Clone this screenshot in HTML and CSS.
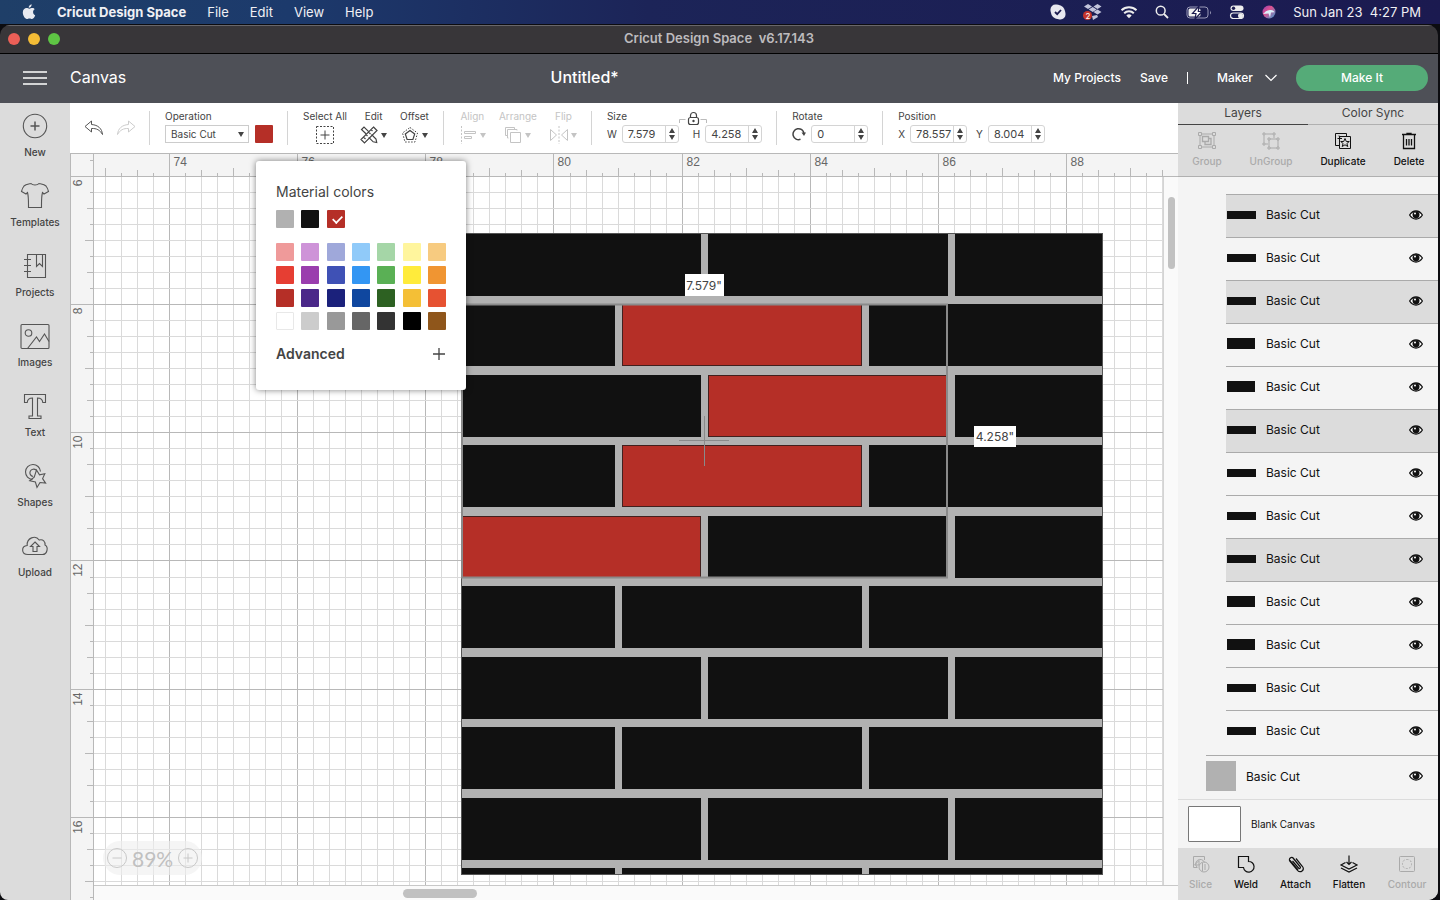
FILE: index.html
```html
<!DOCTYPE html>
<html lang="en">

<head>
    <meta charset="UTF-8">
    <title>Cricut Design Space</title>
    <link rel="stylesheet" href="styles.css">
</head>

<body>
    <svg class="defs" aria-hidden="true">
        <symbol id="eye" viewBox="0 0 14 10">
            <path d="M.6 5C2.4 2.2 4.5 1 7 1s4.600 1.200 6.400 4C11.600 7.800 9.500 9 7 9S2.400 7.800.6 5z" fill="#fff" stroke="#111" stroke-width="1.300" />
            <circle cx="7" cy="4.700" r="3.500" fill="#111" />
            <circle cx="6" cy="3.600" r="1" fill="#fff" />
        </symbol>
        <symbol id="caret" viewBox="0 0 6 6">
            <path d="M0 .5h6L3 5.500z" fill="currentColor" />
        </symbol>
        <symbol id="steps" viewBox="0 0 8 12">
            <path d="M1 5l3-5 3 5zM1 7l3 5 3-5z" fill="#444" />
        </symbol>
    </svg>

    <div class="menubar">
        <svg class="apple" width="14" height="16" viewBox="0 0 14 16" fill="#e8eaf0">
            <path d="M9.700.2c.1 1.900-1.300 3.400-3 3.500C6.500 2 8 .4 9.700.2z" />
            <path d="M12.700 5.300c-1.100.7-1.700 1.600-1.600 2.900 0 1.400.8 2.500 2.100 3-.5 1.400-1.700 3.700-3.100 3.800-1 0-1.400-.6-2.600-.6s-1.700.6-2.600.6C3 15.100.8 11.600.8 8.600c0-2.900 1.900-4.500 3.700-4.500 1.200 0 2 .7 2.900.7.900 0 1.700-.7 3.100-.7.900 0 1.700.5 2.200 1.200z" />
        </svg>
        <nav>
            <a href="#" class="app-name">Cricut Design Space</a>
            <a href="#">File</a>
            <a href="#">Edit</a>
            <a href="#">View</a>
            <a href="#">Help</a>
        </nav>
        <div class="status">
            <svg width="16" height="16" viewBox="0 0 16 16">
                <rect x=".5" y=".5" width="11" height="11" rx="5" fill="#e8e8f0" />
                <rect x="4.500" y="4.500" width="11" height="11" rx="5" fill="#e8e8f0" />
                <circle cx="8" cy="8" r="7" fill="#e8e8f0" />
                <path d="M5 8l2.200 2.200L11 6" fill="none" stroke="#1c1c50" stroke-width="1.800" />
            </svg>
            <svg width="20" height="18" viewBox="0 0 20 18">
                <path d="M5 1l4 2.500L5 6 1 3.500zM14.500 1l4 2.500-4 2.500-4-2.500zM14.500 6.500l4 2.500-4 2.500-4-2.500zM9.700 4l4 2.500-4 2.500-4-2.500zM9 13l5-1 1 2-5 3z" fill="#c3c5dc" />
                <circle cx="4.500" cy="12.500" r="4.500" fill="#c5352b" />
                <text x="2.500" y="15.500" font-size="8" fill="#fff">2</text>
            </svg>
            <svg width="18" height="14" viewBox="0 0 18 14" fill="none" stroke="#eee" stroke-width="2">
                <path d="M1.500 5.200a11 11 0 0 1 15 0M4.200 8.200a7 7 0 0 1 9.600 0" />
                <path d="M6.300 10.600a4 4 0 0 1 5.400 0L9 13.300z" fill="#eee" stroke="none" />
            </svg>
            <svg width="14" height="14" viewBox="0 0 14 14" fill="none" stroke="#eee" stroke-width="1.500">
                <circle cx="5.700" cy="5.700" r="4.400" />
                <path d="M9 9l4 4" stroke-width="1.800" />
            </svg>
            <svg width="26" height="13" viewBox="0 0 26 13">
                <rect x="1" y="1" width="21" height="11" rx="3" fill="none" stroke="#9a9ab8" />
                <path d="M24 4.500q1.800 2 0 4z" fill="#9a9ab8" />
                <rect x="2.500" y="2.500" width="12" height="8" rx="1.500" fill="#eee" />
                <path d="M13 0L6.500 7.500H10L9 13l7-7.500h-3.700z" fill="#fff" stroke="#1c1c50" stroke-width="1.200" />
            </svg>
            <svg width="16" height="14" viewBox="0 0 16 14">
                <rect x="1.500" y=".5" width="13" height="5.500" rx="2.750" fill="#eee" />
                <circle cx="4.500" cy="3.250" r="1.700" fill="#1c1c50" />
                <rect x="1.500" y="8" width="13" height="5.500" rx="2.750" fill="none" stroke="#eee" stroke-width="1.200" />
                <circle cx="11.500" cy="10.750" r="2.500" fill="#eee" />
            </svg>
            <svg width="14" height="14" viewBox="0 0 14 14">
                <defs>
                    <linearGradient id="siri" x1="0" y1="0" x2="1" y2="1">
                        <stop offset="0" stop-color="#8a3fb0" />
                        <stop offset=".4" stop-color="#e0508f" />
                        <stop offset="1" stop-color="#35a0d0" />
                    </linearGradient>
                </defs>
                <circle cx="7" cy="7" r="6.500" fill="url(#siri)" />
                <path d="M1 9c2-2 4-4.500 8-4 2 .3 3 1.200 3.500 2.200L9 7.500 8 12.500 6.500 8.500z" fill="#dcf0fa" />
            </svg>
            <span class="clock">Sun Jan 23&nbsp; 4:27 PM</span>
        </div>
    </div>

    <div class="window">
        <div class="titlebar">
            <div class="lights"><i class="red"></i><i class="yellow"></i><i class="green"></i></div>
            <span>Cricut Design Space&nbsp; v6.17.143</span>
        </div>

        <header class="header">
            <div class="header-left">
                <button aria-label="Menu">
                    <svg width="24" height="14" viewBox="0 0 24 14" stroke="#fff" stroke-width="1.500">
                        <path d="M0 1h24M0 7h24M0 13h24" />
                    </svg>
                </button>
                <span>Canvas</span>
            </div>
            <h1>Untitled*</h1>
            <div class="header-right">
                <a href="#">My Projects</a>
                <a href="#">Save</a>
                <span class="bar"></span>
                <button class="machine">Maker
                    <svg width="12" height="8" viewBox="0 0 12 8" fill="none" stroke="#fff" stroke-width="1.200">
                        <path d="M.5 1L6 6.500 11.500 1" />
                    </svg>
                </button>
                <button class="make-it">Make It</button>
            </div>
        </header>

        <div class="main">
            <nav class="sidebar">
                <button>
                    <svg width="30" height="30" viewBox="0 0 30 30">
                        <circle cx="15" cy="15" r="11.700" />
                        <path d="M15 10.500v9M10.500 15h9" stroke-width="1.500" />
                    </svg>
                    New
                </button>
                <button>
                    <svg width="30" height="30" viewBox="0 0 30 30">
                        <path d="M11 2.500c1.500 2 6.500 2 8 0 2.500.6 5.500 1 7 2.500.8 1 2 3.500 2.500 5.500L24 13l-1.500-1.500c-1.200 4.500-1 9-1 15H8.500c0-6 .2-10.500-1-15L6 13l-4.500-2.500C2 8.500 3.200 6 4 5c1.500-1.500 4.500-1.900 7-2.500z" />
                    </svg>
                    Templates
                </button>
                <button>
                    <svg width="30" height="30" viewBox="0 0 30 30">
                        <path d="M7.500 3.500h18v23h-18zM4 8.500h7M4 14.500h7M4 20.500h7M16.500 3.500v12l3-3 3 3v-12" />
                    </svg>
                    Projects
                </button>
                <button>
                    <svg width="30" height="30" viewBox="0 0 30 30">
                        <rect x="1" y="3.500" width="28" height="24" rx="1" />
                        <circle cx="8.500" cy="12" r="3.300" />
                        <path d="M7.500 27.500l9-11.500 3 4.500 5-7.500 4.500 7.500" />
                    </svg>
                    Images
                </button>
                <button>
                    <svg width="30" height="30" viewBox="0 0 30 30">
                        <path d="M4.500 3.500h21v8h-2.700c-.3-3-1.500-4.500-5.300-4.500v18h3.500v2.500H9V25h3.500V7c-3.800 0-5 1.500-5.300 4.500H4.500z" />
                    </svg>
                    Text
                </button>
                <button>
                    <svg width="30" height="30" viewBox="0 0 30 30">
                        <path d="M12.500 18.500A7.500 7.500 0 1 1 20.500 10.500M13.200 15.500a3.700 3.700 0 1 1 3-6.300" />
                        <path d="M16.500 9l3 4.800 5.300-1.100-2.200 4.900 3 4.500-5.600-.6-3 5-1.600-5.500-5.700-1.300 4.500-3.600z" />
                    </svg>
                    Shapes
                </button>
                <button>
                    <svg width="30" height="30" viewBox="0 0 30 30">
                        <path d="M8 23.500c-7 0-7-8.500-.8-9C6.500 7 15.500 3.500 19.200 9c4-1.200 6.200 1.800 5.800 5 3.800 2 2.300 9.500-2.500 9.500z" />
                        <path d="M15 11l4.500 4.500H17v5h-4v-5h-2.500z" />
                    </svg>
                    Upload
                </button>
            </nav>

            <section class="editor">
                <div class="toolbar">
                    <div class="group history">
                        <button aria-label="Undo">
                            <svg width="20" height="16" viewBox="0 0 20 16" fill="none" stroke="#555">
                                <path d="M7.500 1L1 6.500 7.500 12V8.500c5-.3 8.500 1.500 11 6C18 8.500 14 5 7.500 4.500z" />
                            </svg>
                        </button>
                        <button aria-label="Redo">
                            <svg width="20" height="16" viewBox="0 0 20 16" fill="none" stroke="#ccc">
                                <path d="M12.500 1L19 6.500 12.500 12V8.500c-5-.3-8.500 1.500-11 6C2 8.500 6 5 12.500 4.500z" />
                            </svg>
                        </button>
                    </div>
                    <div class="group operation">
                        <label for="operation">Operation</label>
                        <div class="controls">
                            <div class="select-wrap">
                                <select id="operation">
                                    <option>Basic Cut</option>
                                </select>
                                <svg width="6" height="7"><use href="#caret" /></svg>
                            </div>
                            <div class="color-picker">
                                <button class="swatch-button" aria-label="Material color"></button>
                                <div class="popup">
                                    <h2>Material colors</h2>
                                    <div class="swatches used"></div>
                                    <div class="swatches palette"></div>
                                    <button class="advanced">Advanced
                                        <svg width="14" height="14" viewBox="0 0 14 14" stroke="#444" stroke-width="1.300">
                                            <path d="M7 1v12M1 7h12" />
                                        </svg>
                                    </button>
                                </div>
                            </div>
                        </div>
                    </div>
                    <div class="group">
                        <button class="tool">Select All
                            <svg width="20" height="20" viewBox="0 0 20 20" fill="none" stroke="#444">
                                <rect x="1.500" y="1.500" width="17" height="17" stroke-dasharray="2 1.500" />
                                <path d="M10 5.500v9M5.500 10h9" />
                            </svg>
                        </button>
                        <button class="tool">Edit
                            <span>
                                <svg width="18" height="18" viewBox="0 0 18 18" fill="none" stroke="#444" stroke-width="1.200">
                                    <path d="M6.200 8L1.500 3.500 4 1l4.700 4.700M11.500 8.500l4.500 4.500.7 3.500-3.500-.7L8.700 11.300" />
                                    <path d="M13.500 1L17 4.500 4.500 17 1 13.500zM11 3.500l1.500 1.500M8.500 6l2 2M6 8.500L7.500 10M3.500 11l2 2" />
                                </svg>
                                <svg width="6" height="7"><use href="#caret" /></svg>
                            </span>
                        </button>
                        <button class="tool">Offset
                            <span>
                                <svg width="18" height="18" viewBox="0 0 18 18" fill="none" stroke="#444">
                                    <path d="M9 4.500l4.700 3.400-1.800 5.600H6.100L4.300 7.900z" stroke-width="1.200" />
                                    <path d="M9 1.500L16.500 7 14 16H4L1.500 7z" stroke-dasharray="1.500 1.500" />
                                </svg>
                                <svg width="6" height="7"><use href="#caret" /></svg>
                            </span>
                        </button>
                    </div>
                    <div class="group">
                        <button class="tool" disabled>Align
                            <span>
                                <svg width="18" height="18" viewBox="0 0 18 18" fill="none" stroke="currentColor">
                                    <path d="M2.500 0v18" stroke-dasharray="2 1.500" />
                                    <path d="M5.500 5.500h11v2h-11zM5.500 10.500h7v2h-7z" />
                                </svg>
                                <svg width="6" height="7"><use href="#caret" /></svg>
                            </span>
                        </button>
                        <button class="tool" disabled>Arrange
                            <span>
                                <svg width="18" height="18" viewBox="0 0 18 18" fill="none" stroke="currentColor">
                                    <path d="M6.500 6.500h10v10h-10z" />
                                    <path d="M4.500 12h-1V3.500H13v1M3.500 9.500h-2v-8h9v2" />
                                </svg>
                                <svg width="6" height="7"><use href="#caret" /></svg>
                            </span>
                        </button>
                        <button class="tool" disabled>Flip
                            <span>
                                <svg width="18" height="18" viewBox="0 0 18 18" fill="none" stroke="currentColor">
                                    <path d="M9 0v18" stroke-dasharray="2 1.500" />
                                    <path d="M.5 3.500l6 5.500-6 5.500zM17.500 3.500l-6 5.500 6 5.500z" />
                                </svg>
                                <svg width="6" height="7"><use href="#caret" /></svg>
                            </span>
                        </button>
                    </div>
                    <div class="group fields">
                        <span class="caption">Size</span>
                        <div class="controls size">
                            <label for="w">W</label>
                            <span class="stepper"><input id="w" value="7.579"><svg width="8" height="12"><use href="#steps" /></svg></span>
                            <label for="h">H</label>
                            <span class="stepper"><input id="h" value="4.258"><svg width="8" height="12"><use href="#steps" /></svg></span>
                            <svg class="lock" width="28" height="16" viewBox="0 0 28 16" fill="none">
                                <path d="M.5 12V8.500h6M27.500 12V8.500h-6" stroke="#bbb" />
                                <rect x="9.500" y="6.500" width="10" height="7" rx="2" stroke="#444" stroke-width="1.200" />
                                <path d="M11.500 6V4.500a3 3 0 0 1 6 0V6" stroke="#444" stroke-width="1.200" />
                                <circle cx="14.500" cy="10" r="1.200" fill="#444" />
                            </svg>
                        </div>
                    </div>
                    <div class="group fields">
                        <label for="rotate">Rotate</label>
                        <div class="controls">
                            <svg width="14" height="14" viewBox="0 0 14 14" fill="none" stroke="#444" stroke-width="1.500">
                                <path d="M8.500 12.300A5.500 5.500 0 1 1 12 6.500" />
                                <path d="M9.500 5.500h4.500L12 9z" fill="#444" stroke="none" />
                            </svg>
                            <span class="stepper"><input id="rotate" value="0"><svg width="8" height="12"><use href="#steps" /></svg></span>
                        </div>
                    </div>
                    <div class="group fields">
                        <span class="caption">Position</span>
                        <div class="controls position">
                            <label for="x">X</label>
                            <span class="stepper"><input id="x" value="78.557"><svg width="8" height="12"><use href="#steps" /></svg></span>
                            <label for="y">Y</label>
                            <span class="stepper"><input id="y" value="8.004"><svg width="8" height="12"><use href="#steps" /></svg></span>
                        </div>
                    </div>
                </div>

                <div class="workspace">
                    <svg class="ruler-top"></svg>
                    <svg class="ruler-left"></svg>
                    <div class="stage">
                        <svg class="grid"></svg>
                        <div class="zoom">
                            <button aria-label="Zoom out">
                                <svg width="20" height="20" viewBox="0 0 20 20" fill="none" stroke="#c8c8c8">
                                    <circle cx="10" cy="10" r="9.500" />
                                    <path d="M5.500 10h9" />
                                </svg>
                            </button>
                            <span>89%</span>
                            <button aria-label="Zoom in">
                                <svg width="20" height="20" viewBox="0 0 20 20" fill="none" stroke="#c8c8c8">
                                    <circle cx="10" cy="10" r="9.500" />
                                    <path d="M5.500 10h9M10 5.500v9" />
                                </svg>
                            </button>
                        </div>
                    </div>
                    <div class="scroll-y"><i></i></div>
                    <div class="scroll-x"><i></i></div>
                </div>
            </section>

            <aside class="panel">
                <div class="tabs">
                    <button class="active">Layers</button>
                    <button>Color Sync</button>
                </div>
                <div class="actions top">
                    <button disabled>
                        <svg width="20" height="20" viewBox="0 0 20 20">
                            <path d="M4.500 3h11M4.500 16h11M3 4.500v10M17 4.500v10M1.500 1.500h3v3h-3zM15.500 1.500h3v3h-3zM1.500 14.500h3v3h-3zM15.500 14.500h3v3h-3z" />
                            <path d="M5.500 5.500h6v5h-6zM11.500 7.500H14v6H8v-3" stroke-width="1.300" />
                        </svg>
                        Group
                    </button>
                    <button disabled>
                        <svg width="20" height="20" viewBox="0 0 20 20">
                            <path d="M4.500 3h7M3 4.500v7M7 13H4.500M13 4.500V7M9 8h7M8 9v7M9 17h7M17 9v7" />
                            <path d="M2 2h2v2H2zM12 2h2v2h-2zM2 12h2v2H2zM7 7h2v2H7zM16 7h2v2h-2zM7 16h2v2H7zM16 16h2v2h-2z" />
                        </svg>
                        UnGroup
                    </button>
                    <button>
                        <svg width="20" height="20" viewBox="0 0 20 20">
                            <path d="M6.500 14.500h-4v-12h11v3M6.500 5.500h11v12h-11z" />
                            <path d="M12 7.500l1.300 3h3l-2.400 2 .9 3L12 13.800l-2.800 1.700.9-3-2.400-2h3zM4.500 7.500H9M6 4.500l1 3" />
                        </svg>
                        Duplicate
                    </button>
                    <button>
                        <svg width="20" height="20" viewBox="0 0 20 20">
                            <path d="M3 3.500h14M8 3.500v-1h4v1M4.500 3.500v14h11v-14M7.500 8v6.500M10 8v6.500M12.500 8v6.500" stroke-width="1.300" />
                        </svg>
                        Delete
                    </button>
                </div>
                <ul class="layers"></ul>
                <div class="base-layer">
                    <i></i>
                    <span>Basic Cut</span>
                    <button aria-label="Hide layer"><svg width="14" height="10"><use href="#eye" /></svg></button>
                </div>
                <div class="blank">
                    <i></i>
                    <span>Blank Canvas</span>
                </div>
                <div class="actions bottom">
                    <button disabled>
                        <svg width="20" height="20" viewBox="0 0 20 20">
                            <path d="M6 13.500H2.500v-11h11V6M8 11V6.500L3.500 11z" />
                            <circle cx="13" cy="13" r="5" />
                            <path d="M6.500 13.500a4.500 4.500 0 1 1 7-5M11.500 9v8M14 10v6" />
                        </svg>
                        Slice
                    </button>
                    <button>
                        <svg width="20" height="20" viewBox="0 0 20 20">
                            <path d="M2.500 2.500h10v5a5.300 5.300 0 1 1-5 6h-5z" stroke-width="1.200" />
                        </svg>
                        Weld
                    </button>
                    <button>
                        <svg width="20" height="20" viewBox="0 0 20 20">
                            <path d="M6.500 7l6 7c1 1.200 2.600-.2 1.700-1.300L7.500 4.500C5.500 2 2 4.800 4 7.300l7.500 9c3 3.300 7.500-.3 5-3.800L10 4.500M7 4l7 8.500M4 6.500l8 9.500" stroke-width="1.200" />
                        </svg>
                        Attach
                    </button>
                    <button>
                        <svg width="20" height="20" viewBox="0 0 20 20">
                            <path d="M10 1.500v9M7.500 8L10 10.500 12.500 8M6.500 8.500L2 11l8 4 8-4-4.500-2.500M2 14l8 4 8-4" stroke-width="1.200" />
                        </svg>
                        Flatten
                    </button>
                    <button disabled>
                        <svg width="20" height="20" viewBox="0 0 20 20">
                            <rect x="2.500" y="2.500" width="15" height="15" rx="1" />
                            <rect x="5.500" y="5.500" width="9" height="9" rx="4" stroke-dasharray="2 1.500" />
                        </svg>
                        Contour
                    </button>
                </div>
            </aside>
        </div>
    </div>

    <script src="script.js"></script>
</body>

</html>
```
FILE: styles.css
```css
* {
    box-sizing: border-box;
}

body {
    margin: 0;
    height: 100vh;
    display: flex;
    flex-direction: column;
    overflow: hidden;
    background: #0c0c10;
    color: #444;
    font-family: Inter, "Liberation Sans", sans-serif;
    font-size: 12px;
}

button,
input,
select {
    font: inherit;
    color: inherit;
    background: none;
    border: 0;
    padding: 0;
    margin: 0;
}

a {
    color: inherit;
    text-decoration: none;
}

svg {
    display: block;
    flex-shrink: 0;
}

.defs {
    display: none;
}

/* mac menu bar */
.menubar {
    display: flex;
    align-items: center;
    height: 24px;
    flex-shrink: 0;
    padding: 0 19px 0 22px;
    background: linear-gradient(90deg, #1f3f68, #1c3a6c 20%, #1c2458 45%, #1b1a50);
    color: #f0f0f4;
    font-size: 13px;
}

.menubar nav {
    display: flex;
    gap: 21px;
    margin-left: 21px;
}

.menubar .app-name {
    font-weight: 700;
}

.status {
    display: flex;
    align-items: center;
    gap: 17px;
    margin-left: auto;
}

/* window */
.window {
    flex: 1;
    min-height: 0;
    display: flex;
    flex-direction: column;
    margin: 1px 2px 0 0;
    border-radius: 10px 10px 10px 8px;
    overflow: hidden;
}

.titlebar {
    display: flex;
    align-items: center;
    height: 29px;
    flex-shrink: 0;
    padding: 0 8px 1px;
    background: #383639;
    border-top: 1px solid #69676a;
    border-bottom: 1px solid #000;
    color: #bdbbbe;
    font-size: 13px;
    font-weight: 600;
}

.titlebar span {
    flex: 1;
    text-align: center;
    margin-right: 52px;
    padding-bottom: 2px;
}

.lights {
    display: flex;
    gap: 8px;
}

.lights i {
    width: 12px;
    height: 12px;
    border-radius: 50%;
}

.red {
    background: #ec5f57;
}

.yellow {
    background: #f4bc36;
}

.green {
    background: #5ec544;
}

.header {
    display: flex;
    align-items: center;
    justify-content: space-between;
    height: 49px;
    flex-shrink: 0;
    padding: 0 10px 2px 23px;
    background: #4e5057;
    color: #fff;
}

.header-left {
    display: flex;
    align-items: center;
    gap: 23px;
    font-size: 16px;
}

.header-left span,
.header h1 {
    padding-bottom: 2px;
}

.header h1 {
    margin: 0 10px 0 0;
    font-size: 16px;
    font-weight: 500;
}

.header-right {
    display: flex;
    align-items: center;
    gap: 19px;
    font-weight: 500;
}

.bar {
    width: 1px;
    height: 12px;
    background: #fff;
}

.machine {
    display: flex;
    align-items: center;
    gap: 12px;
    margin-left: 10px;
}

.make-it {
    width: 132px;
    height: 26px;
    border-radius: 13px;
    background: #55ab78;
}

.main {
    flex: 1;
    min-height: 0;
    display: flex;
}

.sidebar {
    width: 70px;
    flex-shrink: 0;
    background: #dcdcdc;
}

.sidebar button {
    display: flex;
    flex-direction: column;
    align-items: center;
    gap: 4px;
    width: 100%;
    height: 70px;
    padding-top: 8px;
    font-size: 10px;
    line-height: 14px;
    font-weight: 500;
}

.sidebar svg {
    fill: none;
    stroke: #555;
    stroke-width: 1.1;
}

.editor {
    flex: 1;
    min-width: 0;
    display: flex;
    flex-direction: column;
}

/* edit toolbar */
.toolbar {
    display: flex;
    height: 50px;
    flex-shrink: 0;
    padding: 8px 0;
    background: #fff;
    font-size: 10px;
    line-height: 10px;
}

.group {
    display: flex;
    gap: 13px;
    padding: 0 14px 0 15px;
    border-right: 1px solid #d4d4d4;
    white-space: nowrap;
}

.group:last-child {
    border: 0;
}

.history {
    align-items: center;
    gap: 12px;
    padding: 0 13px 0 14px;
}

.operation,
.fields {
    flex-direction: column;
    gap: 4px;
}

.controls {
    display: flex;
    align-items: center;
    gap: 6px;
    height: 18px;
}

.fields .controls {
    gap: 5px;
}

.select-wrap {
    position: relative;
}

.select-wrap select {
    appearance: none;
    width: 84px;
    height: 18px;
    padding-left: 5px;
    border: 1px solid #ccc;
}

.select-wrap svg {
    position: absolute;
    right: 5px;
    top: 6px;
    pointer-events: none;
}

.color-picker {
    position: relative;
}

.swatch-button {
    display: block;
    width: 18px;
    height: 18px;
    border-radius: 1px;
    background: #b52f27;
}

.toolbar > .group {
    padding-top: 0;
}

.tool {
    display: flex;
    flex-direction: column;
    align-items: center;
    gap: 4px;
    line-height: 10px;
}

.tool span {
    display: flex;
    align-items: center;
    gap: 3px;
    height: 20px;
}

.tool:disabled {
    color: #c4c4c4;
}

.stepper {
    display: flex;
    align-items: center;
    width: 57px;
    height: 18px;
    border: 1px solid #d4d4d4;
    border-radius: 3px;
}

.stepper input {
    flex: 1;
    min-width: 0;
    height: 16px;
    padding-left: 5px;
    border-right: 1px solid #d4d4d4;
    font-size: 11px;
}

.stepper svg {
    margin: 0 2px;
}

.size {
    position: relative;
}

.size label:nth-of-type(2) {
    margin-left: 9px;
}

.lock {
    position: absolute;
    left: 72px;
    top: -14px;
}

.position label:nth-of-type(2) {
    margin-left: 4px;
}

/* color popup */
.popup {
    position: absolute;
    z-index: 2;
    top: 36px;
    left: 1px;
    width: 210px;
    padding: 22px 20px 27px;
    border-radius: 3px;
    background: #fff;
    box-shadow: 0 0 6px rgba(0, 0, 0, .5);
    font-size: 14px;
    line-height: 18px;
}

.popup h2 {
    margin: 0 0 9px;
    font-size: 14px;
    font-weight: 400;
}

.swatches {
    display: grid;
    grid-template-columns: repeat(7, 18px);
    justify-content: space-between;
    row-gap: 5px;
}

.used {
    margin-bottom: 15px;
}

.swatches input {
    appearance: none;
    width: 18px;
    height: 18px;
    border-radius: 1px;
}

.swatches input.white {
    border: 1px solid #e8e8e8;
}

.swatches input:checked::after {
    content: "";
    display: block;
    width: 9px;
    height: 5px;
    margin: 5px 0 0 5px;
    border: solid #fff;
    border-width: 0 0 2px 2px;
    transform: rotate(-45deg) scale(.85);
}

.advanced {
    display: flex;
    align-items: center;
    justify-content: space-between;
    width: 100%;
    margin-top: 15px;
    font-weight: 600;
    line-height: 18px;
}

/* canvas */
.workspace {
    flex: 1;
    min-height: 0;
    display: grid;
    grid-template: 24px 1fr 15px / 24px 1fr 15px;
    background: #f4f4f4;
    font-family: "Liberation Sans", sans-serif;
}

.workspace > svg,
.grid {
    width: 100%;
    height: 100%;
    overflow: hidden;
    fill: #666;
    font-size: 12px;
}

.workspace > .ruler-top {
    grid-column: 1 / 4;
}

.workspace > .ruler-left {
    grid-row: 2 / 4;
}

.workspace > svg,
.stage {
    min-width: 0;
    min-height: 0;
}

.stage {
    position: relative;
    background: #fff;
}

.grid {
    position: absolute;
    inset: 0;
}

.minor {
    stroke: #dadada;
}

.major {
    stroke: #b8b8b8;
}

.cross {
    stroke: #8a8a8a;
}

.size-tag {
    fill: #444;
    font-family: Inter, sans-serif;
    font-size: 12px;
    text-anchor: middle;
}

.scroll-y {
    display: flex;
    justify-content: center;
    padding-top: 20px;
    background: #fafafa;
    border-left: 1px solid #d4d4d4;
}

.scroll-y i {
    width: 7px;
    height: 72px;
    border-radius: 4px;
    background: #c1c1c1;
}

.scroll-x {
    grid-column: 2 / 4;
    padding: 3px 0 0 309px;
    background: #fafafa;
    border-top: 1px solid #c8c8c8;
}

.scroll-x i {
    display: block;
    width: 74px;
    height: 9px;
    border-radius: 5px;
    background: #c1c1c1;
}

.zoom {
    position: absolute;
    left: 9px;
    bottom: 10px;
    display: flex;
    align-items: center;
    gap: 5px;
    height: 34px;
    padding: 0 4px;
    border-radius: 17px;
    background: rgba(238, 238, 238, .6);
    color: #c0c0c0;
    font-family: Lato, sans-serif;
    font-size: 21px;
}

/* layers panel */
.panel {
    width: 260px;
    flex-shrink: 0;
    display: flex;
    flex-direction: column;
    background: #f4f4f4;
    color: #111;
}

.tabs {
    display: flex;
    background: #dcdcdc;
    color: #444;
}

.tabs button {
    flex: 1;
    height: 22px;
    padding-bottom: 2px;
    border-bottom: 1px solid #b0b0b0;
}

.tabs .active {
    border-color: #444;
}

.actions {
    display: grid;
    background: #dcdcdc;
    font-size: 10px;
}

.actions.top {
    grid-template-columns: 58fr 70fr 74fr 58fr;
    height: 52px;
    border-bottom: 1px solid #b0b0b0;
}

.actions.bottom {
    grid-template-columns: 45fr 46fr 53fr 54fr 62fr;
    height: 52px;
}

.actions button {
    display: flex;
    flex-direction: column;
    align-items: center;
    gap: 4px;
    padding-top: 6px;
    line-height: 12px;
    font-weight: 500;
}

.actions svg {
    fill: none;
    stroke: currentColor;
}

.actions button:disabled {
    color: #aaa;
}

.layers {
    flex: 1;
    min-height: 0;
    overflow: hidden;
    list-style: none;
    margin: 0;
    padding: 17px 0 0 48px;
}

.layers li,
.base-layer {
    display: flex;
    align-items: center;
    height: 43px;
    padding: 0 15px 3px 0;
    border-top: 1px solid #aaa;
}

.layers .selected {
    background: #dcdcdc;
}

.thumb {
    display: flex;
    justify-content: center;
    width: 30px;
    margin: 0 10px 0 0;
}

.thumb i {
    width: 29px;
    height: 8px;
    background: #111;
}

.thumb .tall {
    width: 28px;
    height: 11px;
}

.layers button,
.base-layer button {
    margin-left: auto;
}

.base-layer {
    height: 44px;
    margin-left: 28px;
}

.base-layer i {
    width: 30px;
    height: 30px;
    margin-right: 10px;
    background: #b1b1b1;
}

.blank {
    display: flex;
    align-items: center;
    gap: 10px;
    height: 49px;
    padding-left: 10px;
    border-top: 1px solid #dcdcdc;
    font-size: 10px;
}

.blank i {
    width: 53px;
    height: 36px;
    border: 1px solid #777;
    border-radius: 1px;
    background: #fff;
}
```
FILE: script.js
```js
const STEP = 16.02        // a quarter unit at 89% zoom
const ORIGIN_X = 76       // x of unit 74 on the stage
const ORIGIN_Y = 0        // y of unit 6 on the stage

const rulerTop = document.querySelector('.ruler-top')
const rulerLeft = document.querySelector('.ruler-left')
const grid = document.querySelector('.grid')

function draw(parent, tag, attrs, text) {
    const el = document.createElementNS('http://www.w3.org/2000/svg', tag)
    for (const key in attrs) el.setAttribute(key, attrs[key])
    if (text) el.textContent = text
    parent.appendChild(el)
}

function line(parent, x1, y1, x2, y2, cls) {
    draw(parent, 'line', { x1, y1, x2, y2, class: cls })
}

function tick(i) {
    if (i % 8 === 0) return 24
    if (i % 4 === 0) return 9
    return i % 2 === 0 ? 7 : 4
}

function rect(x, y, width, height, fill, stroke = 'none', w = 1) {
    draw(grid, 'rect', { x, y, width, height, fill, stroke, 'stroke-width': w })
}

// rulers and grid
const width = grid.clientWidth
const height = grid.clientHeight

for (let i = -4; ORIGIN_X + i * STEP < width + 14; i++) {
    const x = Math.round(ORIGIN_X + i * STEP) - 0.5
    line(rulerTop, x + 24, 24 - tick(i), x + 24, 24, 'major')
    if (i % 8 === 0) draw(rulerTop, 'text', { x: x + 28, y: 13 }, String(74 + i / 4))
    line(grid, x, 0, x, height, i % 8 === 0 ? 'major' : 'minor')
}
for (let i = 0; ORIGIN_Y + i * STEP < height + 14; i++) {
    const y = Math.round(ORIGIN_Y + i * STEP) - 0.5
    line(rulerLeft, 24 - tick(i), y, 24, y, 'major')
    if (i % 8 === 0) draw(rulerLeft, 'text', { transform: `translate(12 ${y + 3}) rotate(-90)`, 'text-anchor': 'end' }, String(6 + i / 4))
    line(grid, 0, y, width, y, i % 8 === 0 ? 'major' : 'minor')
}
line(rulerTop, 0, 0.5, width + 39, 0.5, 'major')
line(rulerTop, 0, 23.5, width + 39, 23.5, 'major')
line(rulerTop, 0.5, 0, 0.5, 24, 'major')
line(rulerTop, 23.5, 0, 23.5, 24, 'major')
line(rulerTop, 20, 7.5, 24, 7.5, 'major')
line(rulerLeft, 0.5, 0, 0.5, height + 15, 'major')
line(rulerLeft, 23.5, 0, 23.5, height + 15, 'major')

// brick wall
const WALL = { x: 367, y: 56, size: 642 }
const edges = [
    [[367, 607], [614, 854], [861, 1009]],
    [[367, 521], [528, 768], [775, 1009]]
]
const red = { 1: 1, 2: 1, 3: 1, 4: 0 }

rect(WALL.x, WALL.y, WALL.size, WALL.size, '#b1b1b1')
for (let row = 0; row < 10; row++) {
    const y = Math.round(WALL.y + 0.8 + row * 70.5)
    const h = Math.min(62, WALL.y + WALL.size - y)
    edges[row % 2].forEach(([from, to], i) => {
        rect(from, y, to - from, h, '#111')
        if (red[row] === i) rect(from + 0.5, y + 0.5, to - from - 1, h - 1, '#b52f27', '#42201e')
    })
}
rect(367.5, 56.5, 641, 641, 'none', '#555')

// selection box, its centre mark and its size tags
rect(368, 127.5, 485, 273, 'none', '#8a8a8a', 2)
line(grid, 585, 263.5, 635, 263.5, 'cross')
line(grid, 610.5, 239, 610.5, 289, 'cross')

rect(591, 97, 39, 22, '#fff')
draw(grid, 'text', { x: 610, y: 113, class: 'size-tag' }, '7.579"')
rect(880, 249, 42, 21, '#fff')
draw(grid, 'text', { x: 901, y: 264, class: 'size-tag' }, '4.258"')

// color popup
const used = ['#b1b1b1', '#111111', '#b52f27']
const palette = [
    '#ef9a9a', '#ce93d8', '#9fa8da', '#90caf9', '#a5d6a7', '#fff59d', '#f7cb80',
    '#e63e33', '#9a3eae', '#3f51b5', '#3396f3', '#5ab055', '#ffeb3b', '#f09532',
    '#b52f27', '#4b2889', '#1b217b', '#0f479f', '#2d6122', '#f4bf36', '#e65232',
    '#ffffff', '#cccccc', '#999999', '#666666', '#333333', '#000000', '#8f561b'
]

function addSwatches(box, colors, checked) {
    colors.forEach(color => {
        const input = document.createElement('input')
        input.type = 'radio'
        input.name = 'color'
        input.setAttribute('aria-label', color)
        input.checked = checked === color
        input.style.background = color
        if (color === '#ffffff') input.className = 'white'
        box.appendChild(input)
    })
}
addSwatches(document.querySelector('.palette'), palette)
addSwatches(document.querySelector('.used'), used, '#b52f27')

// layers
const selected = [0, 2, 5, 8]
const tall = [3, 4, 9, 10]
const list = document.querySelector('.layers')
for (let i = 0; i < 13; i++) {
    const li = document.createElement('li')
    if (selected.includes(i)) li.className = 'selected'
    li.innerHTML = `<span class="thumb"><i class="${tall.includes(i) ? 'tall' : ''}"></i></span>
        <span>Basic Cut</span>
        <button aria-label="Hide layer"><svg width="14" height="10"><use href="#eye" /></svg></button>`
    list.appendChild(li)
}
```
